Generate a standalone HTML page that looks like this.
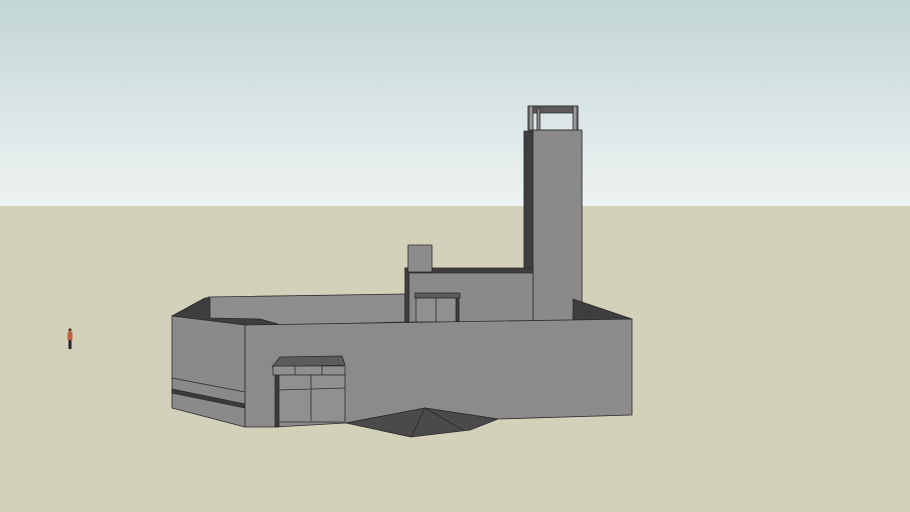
<!DOCTYPE html>
<html><head><style>
html,body{margin:0;padding:0;width:910px;height:512px;overflow:hidden;}
</style></head><body>
<svg width="910" height="512" viewBox="0 0 910 512" xmlns="http://www.w3.org/2000/svg">
<defs><linearGradient id="sky" x1="0" y1="0" x2="0" y2="1">
<stop offset="0" stop-color="#c3d5d5"/><stop offset="1" stop-color="#eef3f3"/></linearGradient></defs>
<rect x="0" y="0" width="910" height="207" fill="url(#sky)"/>
<rect x="0" y="206" width="910" height="306" fill="#d3d1ba"/>
<g stroke="#2a2a2a" stroke-width="0.8" stroke-linejoin="round">
<!-- back wall -->
<polygon points="208,297 405,294 405,322 250,326 208,318" fill="#8e8e8e"/>
<!-- tower -->
<polygon points="524,131 533,131 533,322 524,322" fill="#3e3e3e"/>
<polygon points="533,130 582,130 582,322 533,322" fill="#8a8a8a"/>
<!-- tower cap -->
<polygon points="528,106 578,106 578,130 528,130" fill="none"/>
<polygon points="530,106 576,106 576,113 530,113" fill="#5a5a5a"/>
<rect x="529" y="106" width="4" height="24" fill="#9a9a9a"/>
<rect x="537" y="108" width="3" height="22" fill="#8a8a8a"/>
<rect x="573" y="106" width="4" height="24" fill="#9a9a9a"/>
<!-- middle block -->
<polygon points="405,268 533,268 533,274 405,274" fill="#3e3e3e"/>
<polygon points="405,268 409,268 409,322 405,322" fill="#3e3e3e"/>
<polygon points="409,273 533,273 533,322 409,322" fill="#8a8a8a"/>
<!-- cylinder -->
<rect x="408" y="245" width="24" height="27" fill="#8c8c8c"/>
<!-- awning/door mid -->
<polygon points="415,293 460,293 460,298 415,298" fill="#5c5c5c"/>
<rect x="416" y="298" width="41" height="24" fill="#909090"/>
<line x1="436" y1="298" x2="436" y2="322"/>
<rect x="456" y="298" width="3" height="24" fill="#3a3a3a"/>
<!-- right dark roof -->
<polygon points="573,299 632,319 573,321" fill="#3e3e3e"/>
<!-- left roof dark -->
<polygon points="172,316 205,298 210,298 210,318 260,319 278,324 245,326" fill="#3e3e3e"/>
<!-- left face -->
<polygon points="172,316 245,325 245,427 172,408" fill="#8a8a8a"/>
<polygon points="172,389 245,404 245,408 172,393" fill="#3a3a3a"/>
<line x1="172" y1="378" x2="245" y2="392"/>
<!-- front face -->
<polygon points="245,325 632,319 632,415 498,419 425,408 346,423 275,427 245,427" fill="#8b8b8b"/>
<!-- bottom hip -->
<polygon points="346,423 425,408 498,419 470,430 411,437" fill="#4a4a4a"/>
<line x1="425" y1="408" x2="411" y2="437"/>
<line x1="425" y1="408" x2="463" y2="430"/>
<!-- front door -->
<polygon points="280,357 342,356 345,365 272,367" fill="#5c5c5c"/>
<rect x="273" y="366" width="72" height="9" fill="#909090"/>
<line x1="295" y1="366" x2="295" y2="375"/><line x1="322" y1="366" x2="322" y2="375"/>
<rect x="275" y="375" width="4" height="52" fill="#3a3a3a"/>
<rect x="279" y="375" width="66" height="47" fill="#909090"/>
<line x1="279" y1="390" x2="345" y2="388"/>
<line x1="311" y1="375" x2="311" y2="421"/>
</g>
<!-- person -->
<circle cx="70" cy="330" r="1.6" fill="#553322"/>
<rect x="67.5" y="332" width="5" height="8" fill="#c0603c"/>
<rect x="68.5" y="340" width="3" height="9" fill="#223"/>
</svg>
</body></html>
